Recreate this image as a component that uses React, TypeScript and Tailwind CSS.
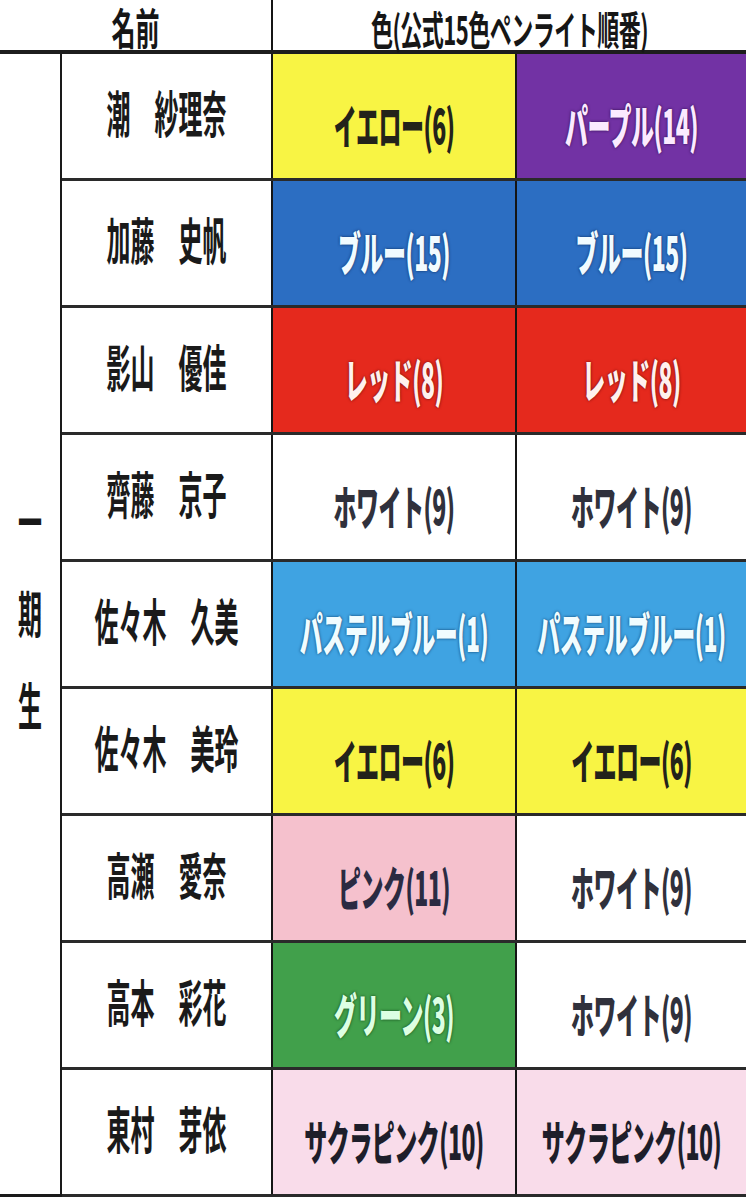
import * as React from "react";

type Swatch = "yellow" | "purple" | "blue" | "red" | "white" | "pastel" | "pink" | "green" | "sakura";

// セルの色と文字色
const swatchClass: Record<Swatch, string> = {
  yellow: "bg-[#f8f444] text-[#23231a]",
  purple: "bg-[#7232a4] text-[#fbeaff] [text-shadow:0_0_2px_#2a0b45]",
  blue: "bg-[#2c6ec2] text-[#f1fbff] [text-shadow:0_0_2px_#0b2a5a]",
  red: "bg-[#e5291d] text-[#fff1ee] [text-shadow:0_0_2px_#5a0b0b]",
  white: "bg-white text-[#30313c]",
  pastel: "bg-[#3fa3e2] text-[#f0fcff] [text-shadow:0_0_2px_#0b3a66]",
  pink: "bg-[#f5c1cd] text-[#2b2b42]",
  green: "bg-[#41a04b] text-[#dcffe3] [text-shadow:0_0_2px_#0b3a12]",
  sakura: "bg-[#f9dcea] text-[#1e1e2a]",
};

const members: { name: string; first: [Swatch, string]; second: [Swatch, string] }[] = [
  { name: "潮　紗理奈", first: ["yellow", "イエロー(6)"], second: ["purple", "パープル(14)"] },
  { name: "加藤　史帆", first: ["blue", "ブルー(15)"], second: ["blue", "ブルー(15)"] },
  { name: "影山　優佳", first: ["red", "レッド(8)"], second: ["red", "レッド(8)"] },
  { name: "齊藤　京子", first: ["white", "ホワイト(9)"], second: ["white", "ホワイト(9)"] },
  { name: "佐々木　久美", first: ["pastel", "パステルブルー(1)"], second: ["pastel", "パステルブルー(1)"] },
  { name: "佐々木　美玲", first: ["yellow", "イエロー(6)"], second: ["yellow", "イエロー(6)"] },
  { name: "高瀬　愛奈", first: ["pink", "ピンク(11)"], second: ["white", "ホワイト(9)"] },
  { name: "高本　彩花", first: ["green", "グリーン(3)"], second: ["white", "ホワイト(9)"] },
  { name: "東村　芽依", first: ["sakura", "サクラピンク(10)"], second: ["sakura", "サクラピンク(10)"] },
];

const font = "font-['Noto_Sans_CJK_JP','Noto_Sans',sans-serif]";

function ColorCell({ swatch, label, divider }: { swatch: Swatch; label: string; divider?: boolean }) {
  return (
    <div
      className={`flex items-center justify-center pt-4 ${swatchClass[swatch]} ${
        divider ? "border-r-2 border-[#151515]" : ""
      }`}
    >
      <span className="inline-block scale-y-[2.05] text-[23px] leading-none font-black tracking-[-0.5px]">
        {label}
      </span>
    </div>
  );
}

export default function App() {
  return (
    <div className={`w-[746px] h-[1198px] overflow-hidden bg-white ${font}`}>
      {/* 見出し */}
      <div className="grid h-[54px] grid-cols-[273px_1fr] border-b-4 border-[#1d1d1d]">
        <div className="flex items-center justify-center border-r-2 border-[#151515] pt-1">
          <span className="inline-block scale-y-[1.8] text-[24px] leading-none font-bold text-[#161616]">
            名前
          </span>
        </div>
        <div className="flex items-center justify-center pt-1">
          <span className="inline-block scale-y-[1.8] text-[22px] leading-none font-bold tracking-[-0.5px] text-[#161616]">
            色(公式15色ペンライト順番)
          </span>
        </div>
      </div>

      <div className="flex">
        {/* 期 */}
        <div className="flex w-[62px] flex-col items-center justify-center gap-[68px] border-r-2 border-b-[3px] border-[#1a1a1a] pb-6">
          {["一", "期", "生"].map((c) => (
            <span key={c} className="inline-block scale-y-[2.1] text-[24px] leading-none font-bold text-[#181818]">
              {c}
            </span>
          ))}
        </div>

        <div className="flex-1">
          {members.map((m) => (
            <div
              key={m.name}
              className="grid h-[127px] grid-cols-[211px_244px_1fr] border-b-[3px] border-[#2a2a2a]"
            >
              <div className="flex items-center justify-center border-r-2 border-[#151515] pb-2">
                <span className="inline-block scale-y-[2.1] text-[24px] leading-none font-bold text-[#1a1a1a]">
                  {m.name}
                </span>
              </div>
              <ColorCell swatch={m.first[0]} label={m.first[1]} divider />
              <ColorCell swatch={m.second[0]} label={m.second[1]} />
            </div>
          ))}
        </div>
      </div>
    </div>
  );
}
